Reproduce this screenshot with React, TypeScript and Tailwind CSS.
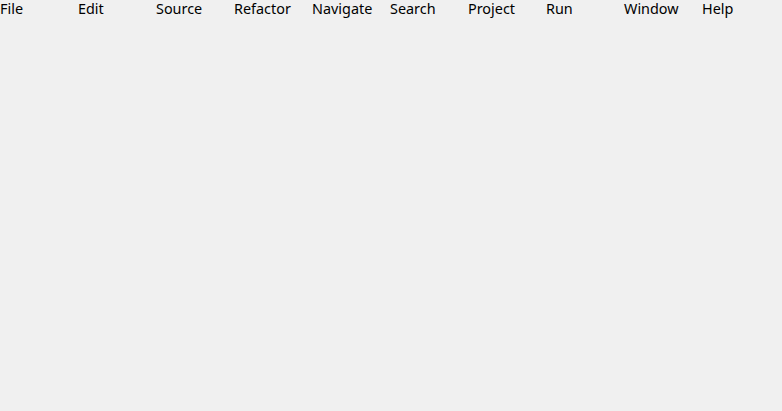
import React from "react";

const items = ["File", "Edit", "Source", "Refactor", "Navigate", "Search", "Project", "Run", "Window", "Help"];

export default function App() {
  return (
    <div className="w-[782px] h-[411px] bg-[#f0f0f0] overflow-hidden" style={{ fontFamily: '"Noto Sans", "Open Sans", sans-serif' }}>
      <div className="flex h-[18px]">
        {items.map((it) => (
          <div key={it} className="w-[78px] shrink-0 text-[14.4px] leading-[18px] text-black">
            {it}
          </div>
        ))}
      </div>
    </div>
  );
}
